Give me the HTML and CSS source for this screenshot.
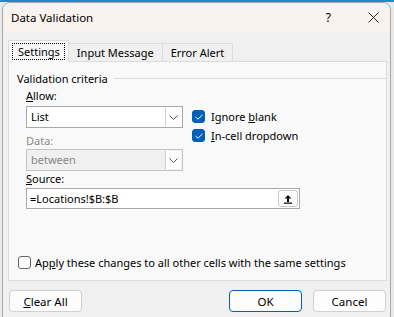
FILE: index.html
```html
<!DOCTYPE html>
<html lang="en">
<head>
    <meta charset="UTF-8">
    <title>Data Validation</title>
    <link rel="stylesheet" href="styles.css">
</head>
<body>

    <div class="dialog">
        <!-- Title bar -->
        <div class="titlebar">
            <span class="title">Data Validation</span>
            <span class="help">?</span>
            <svg class="close" width="11" height="11" viewBox="0 0 11 11">
                <path d="M0.5 0.5 L10.5 10.5 M10.5 0.5 L0.5 10.5" stroke="#222" stroke-width="1" fill="none"/>
            </svg>
        </div>

        <div class="content">
            <div class="tabs">
                <div class="tab active"><span class="focus">Settings</span></div>
                <div class="tab">Input Message</div>
                <div class="tab">Error Alert</div>
            </div>

            <div class="panel">
                <div class="group-title">
                    <span>Validation criteria</span>
                    <div class="rule"></div>
                </div>

                <div class="criteria">
                    <div class="left-col">
                        <div class="label"><u>A</u>llow:</div>
                        <div class="select">
                            <span class="value">List</span>
                            <span class="arrow">
                                <svg width="9" height="5" viewBox="0 0 9 5"><path d="M0.5 0.5 L4.5 4.5 L8.5 0.5" stroke="#555" fill="none"/></svg>
                            </span>
                        </div>
                        <div class="label disabled">Data:</div>
                        <div class="select disabled">
                            <span class="value">between</span>
                            <span class="arrow">
                                <svg width="9" height="5" viewBox="0 0 9 5"><path d="M0.5 0.5 L4.5 4.5 L8.5 0.5" stroke="#555" fill="none"/></svg>
                            </span>
                        </div>
                    </div>
                    <div class="right-col">
                        <label class="check">
                            <span class="box checked">
                                <svg width="8" height="6" viewBox="0 0 8 6"><path d="M0.5 3 L3 5.2 L7.5 0.8" stroke="#fff" stroke-width="1" fill="none"/></svg>
                            </span>
                            <span>Ignore <u>b</u>lank</span>
                        </label>
                        <label class="check">
                            <span class="box checked">
                                <svg width="8" height="6" viewBox="0 0 8 6"><path d="M0.5 3 L3 5.2 L7.5 0.8" stroke="#fff" stroke-width="1" fill="none"/></svg>
                            </span>
                            <span><u>I</u>n-cell dropdown</span>
                        </label>
                    </div>
                </div>

                <div class="label source-label"><u>S</u>ource:</div>
                <div class="source">
                    <span class="value">=Locations!$B:$B</span>
                    <span class="pick">
                        <svg width="10" height="10" viewBox="0 0 10 10">
                            <path d="M5 1 L1.5 4.5 L4 4.5 L4 8 L6 8 L6 4.5 L8.5 4.5 Z" fill="#111"/>
                            <rect x="1" y="8.5" width="8" height="1.3" fill="#111"/>
                        </svg>
                    </span>
                </div>

                <label class="check apply">
                    <span class="box"></span>
                    <span>Ap<u>p</u>ly these changes to all other cells with the same settings</span>
                </label>
            </div>

            <div class="buttons">
                <button class="btn"><u>C</u>lear All</button>
                <div class="right-buttons">
                    <button class="btn primary">OK</button>
                    <button class="btn">Cancel</button>
                </div>
            </div>
        </div>
    </div>

</body>
</html>
```

FILE: styles.css
```css
* {
    margin: 0;
    padding: 0;
    box-sizing: border-box;
}

body {
    font-family: 'Noto Sans', 'Open Sans', sans-serif;
    font-size: 11px;
    color: #000;
    width: 394px;
    height: 317px;
    overflow: hidden;
    padding: 2px 3px 0 2px;
    background: linear-gradient(to bottom, #1b8ad3 0, #1b8ad3 2px, #e9e9e9 2px);
}

/* Dialog window */
.dialog {
    width: 389px;
    height: 320px;
    background-color: #f0f0f0;
    border: 1px solid #a9a9a9;
    border-radius: 8px 8px 0 0;
    overflow: hidden;
}

.titlebar {
    display: flex;
    align-items: center;
    height: 29px;
    background-color: #faf2ed;
    padding-left: 8px;
}

.title {
    flex: 1;
    font-size: 11.5px;
}

.help {
    font-size: 12px;
    margin-right: 37px;
}

.close {
    margin-right: 11px;
}

.content {
    padding: 8px 2px 0 5px;
}

/* Tabs */
.tabs {
    display: flex;
    align-items: flex-end;
    height: 21px;
    position: relative;
    z-index: 1;
}

.tab {
    height: 18px;
    padding: 0 8px;
    border: 1px solid #dcdcdc;
    border-bottom: none;
    background-color: #f0f0f0;
    line-height: 17px;
    margin-left: -1px;
}

.tab.active {
    height: 22px;
    margin-bottom: -1px;
    margin-left: 0;
    background-color: #f9f9f9;
    padding: 2px 3px 0 3px;
    line-height: 16px;
}

.focus {
    display: inline-block;
    border: 1px dotted #000;
    padding: 0 4px 0 5px;
    line-height: 15px;
}

.panel {
    height: 220px;
    width: 379px;
    background-color: #f9f9f9;
    border: 1px solid #dcdcdc;
    padding: 8px 0 0 8px;
}

.group-title {
    display: flex;
    align-items: center;
    height: 16px;
}

.group-title .rule {
    flex: 1;
    height: 1px;
    background-color: #dcdcdc;
    margin-left: 6px;
}

.criteria {
    display: flex;
    padding-left: 9px;
    margin-top: 3px;
}

.left-col {
    width: 157px;
}

.label {
    line-height: 14px;
    height: 14px;
    margin-bottom: 3px;
}

.label.disabled {
    color: #8a8a8a;
    margin-top: 6px;
    margin-bottom: 1px;
}

.select {
    display: flex;
    height: 22px;
    border: 1px solid #a8a8a8;
    background-color: #fff;
}

.select.disabled {
    background-color: #f0f0f0;
    border-color: #c4c4c4;
    color: #888;
}

.select .value {
    flex: 1;
    padding-left: 4px;
    line-height: 19px;
}

.select .arrow {
    width: 16px;
    border-left: 1px solid #d0d0d0;
    margin: 1px 1px 1px 0;
    display: flex;
    align-items: center;
    justify-content: center;
    background-color: #fff;
}

.right-col {
    padding-left: 9px;
    padding-top: 18px;
}

.check {
    display: flex;
    align-items: center;
    height: 19px;
    gap: 6px;
}

.box {
    width: 13px;
    height: 13px;
    border: 1px solid #666;
    border-radius: 3px;
    display: flex;
    align-items: center;
    justify-content: center;
    background-color: #fbfbfb;
}

.box.checked {
    background-color: #005fb8;
    border-color: #005fb8;
}

.source-label {
    margin-top: 1px;
    margin-left: 9px;
    margin-bottom: 2px;
}

.source {
    display: flex;
    align-items: center;
    margin-left: 9px;
    width: 274px;
    height: 21px;
    border: 1px solid #a8a8a8;
    background-color: #fff;
}

.source .value {
    flex: 1;
    padding-left: 3px;
}

.pick {
    width: 20px;
    height: 17px;
    margin-right: 1px;
    border: 1px solid #c8c8c8;
    border-radius: 3px;
    display: flex;
    align-items: center;
    justify-content: center;
    background-color: #fdfdfd;
}

.apply {
    margin-top: 44px;
    margin-left: 1px;
    gap: 4px;
}

/* Bottom buttons */
.buttons {
    display: flex;
    justify-content: space-between;
    padding: 9px 2px 0 1px;
}

.right-buttons {
    display: flex;
    gap: 11px;
}

.btn {
    font-family: inherit;
    font-size: 11.5px;
    width: 73px;
    height: 22px;
    background-color: #fdfdfd;
    border: 1px solid #d0d0d0;
    border-radius: 4px;
    color: #000;
}

.btn.primary {
    border-color: #005fb8;
}
```
